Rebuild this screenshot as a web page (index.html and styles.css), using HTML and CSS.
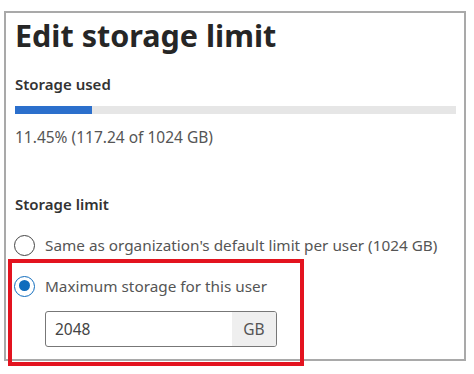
FILE: index.html
```html
<!DOCTYPE html>
<html lang="en">
<head>
    <meta charset="UTF-8">
    <title>Edit storage limit</title>
    <link rel="stylesheet" href="styles.css">
</head>
<body>
    <div class="panel">
        <h1>Edit storage limit</h1>

        <div class="label">Storage used</div>
        <div class="bar"><div class="bar-fill" style="width: 17.5%"></div></div>
        <div class="usage">11.45% (117.24 of 1024 GB)</div>

        <div class="label limit-label">Storage limit</div>
        <label class="option">
            <span class="radio"></span>
            Same as organization's default limit per user (1024 GB)
        </label>
        <label class="option">
            <span class="radio checked"></span>
            Maximum storage for this user
        </label>
        <div class="field">
            <div class="field-value">2048</div>
            <div class="field-unit">GB</div>
        </div>
    </div>
    <!-- annotation box -->
    <div class="highlight"></div>
</body>
</html>
```

FILE: styles.css
```css
body {
    margin: 0;
    font-family: "Noto Sans", "Open Sans", sans-serif;
    color: #333;
    background: #fff;
    position: relative;
    width: 474px;
    height: 374px;
    overflow: hidden;
}
.panel {
    margin: 11px 0 0 4px;
    width: 462px;
    height: 350px;
    box-sizing: border-box;
    border: 2px solid #a9a9a9;
    padding: 0 0 0 9px;
}
h1 {
    margin: 2px 0 0;
    font-size: 30.5px;
    line-height: 40px;
    font-weight: 700;
    color: #262626;
}
.label {
    margin-top: 19px;
    font-size: 15px;
    line-height: 20px;
    font-weight: 600;
    color: #333;
}
.limit-label {
    margin-top: 47px;
}
.bar {
    margin-top: 12px;
    width: 441px;
    height: 8px;
    background: #e6e6e6;
}
.bar-fill {
    height: 100%;
    background: #2b6fcc;
}
.usage {
    margin-top: 13px;
    font-size: 15.5px;
    line-height: 20px;
    color: #555;
}
.option {
    display: flex;
    align-items: center;
    gap: 10px;
    margin-top: 20px;
    font-size: 15.3px;
    line-height: 22px;
    color: #555;
}
.option + .option {
    margin-top: 19px;
}
.radio {
    width: 21px;
    height: 21px;
    box-sizing: border-box;
    border: 1.5px solid #444;
    border-radius: 50%;
    flex: none;
    margin-left: -1px;
}
.radio.checked {
    border-color: #0f6cbd;
    position: relative;
}
.radio.checked::after {
    content: "";
    position: absolute;
    left: 3.5px;
    top: 3.5px;
    width: 11px;
    height: 11px;
    border-radius: 50%;
    background: #0f6cbd;
}
.field {
    display: flex;
    margin: 14px 0 0 30px;
    width: 232px;
    height: 36px;
    box-sizing: border-box;
    border: 1.5px solid #777;
    border-radius: 3px;
    overflow: hidden;
    font-size: 15.5px;
    color: #444;
}
.field-value {
    flex: 1;
    display: flex;
    align-items: center;
    padding-left: 9px;
}
.field-unit {
    width: 44px;
    display: flex;
    align-items: center;
    justify-content: center;
    background: #efefef;
    color: #555;
}
.highlight {
    position: absolute;
    left: 8px;
    top: 259px;
    width: 296px;
    height: 107px;
    box-sizing: border-box;
    border: 4px solid #e3131f;
}
```
